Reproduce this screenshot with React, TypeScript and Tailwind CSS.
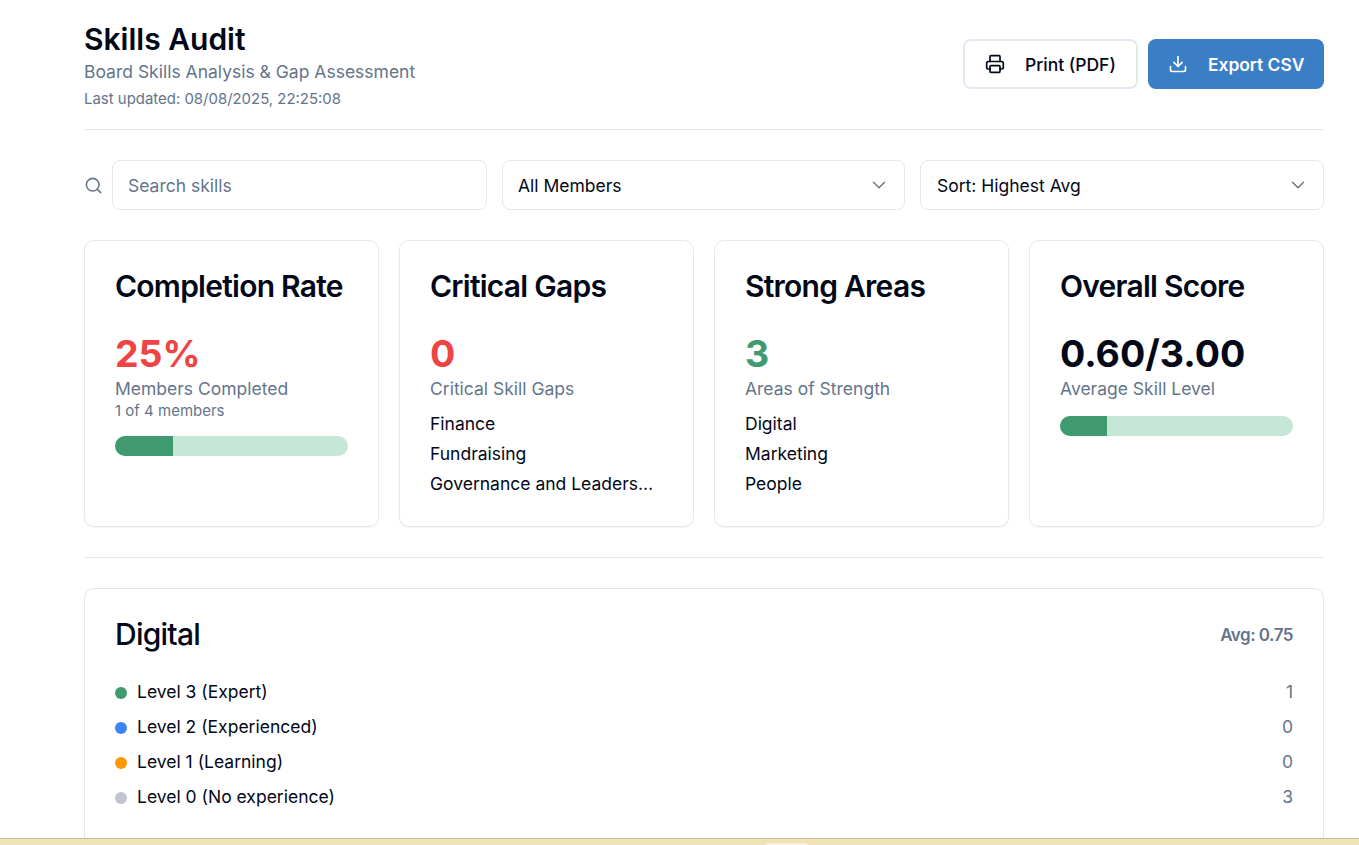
import { Printer, Download, Search, ChevronDown } from "lucide-react";

function Stat({ title, value, valueClass, label, note, items, progress }: { title: string; value: string; valueClass: string; label: string; note?: string; items?: string[]; progress?: number }) {
  return (
    <div className="min-w-0 h-[287px] rounded-[10px] border border-[#e2e8f0] bg-white px-[30px] pt-[25px] shadow-[0_1px_2px_rgba(15,23,42,0.04)]">
      <h2 className="text-[30px] leading-[40px] font-semibold tracking-[-0.75px] text-[#020817] whitespace-nowrap">{title}</h2>
      <div className={`mt-[24px] text-[37.5px] leading-[48px] font-bold ${valueClass}`}>{value}</div>
      <div className="-mt-[1px] mb-[1px] text-[17.5px] leading-[23px] text-[#64748b]">{label}</div>
      {note && <div className="text-[15px] leading-[20px] text-[#64748b]">{note}</div>}
      {progress !== undefined && (
        <div className={`${note ? "mt-[15px]" : "mt-[16px]"} h-[20px] rounded-[10px] bg-[#c6e7d8] overflow-hidden`}>
          <div className="h-full bg-[#3f9a6f]" style={{ width: `${progress}%` }} />
        </div>
      )}
      {items && (
        <ul className="mt-[9px]">
          {items.map((i) => (
            <li key={i} className="text-[17.5px] leading-[30px] text-[#020817] truncate">{i}</li>
          ))}
        </ul>
      )}
    </div>
  );
}

function Level({ color, label, count }: { color: string; label: string; count: number }) {
  return (
    <div className="flex items-center justify-between h-[35px]">
      <div className="flex items-center gap-[10px]">
        <span className={`w-[12px] h-[12px] rounded-full ${color}`} />
        <span className="text-[17.5px] text-[#020817]">{label}</span>
      </div>
      <span className="text-[17.5px] text-[#64748b]">{count}</span>
    </div>
  );
}

export default function App() {
  return (
    <div className="h-[845px] flex flex-col overflow-hidden bg-white font-['Inter',sans-serif]">
      <main className="flex-1 min-h-0 overflow-hidden pl-[84px] pr-[35px]">
        <header className="h-[130px] border-b border-[#e2e8f0] flex justify-between items-start pt-[20px]">
          <div>
            <h1 className="text-[30px] leading-[38px] font-semibold text-[#020817]">Skills Audit</h1>
            <p className="mt-[1px] text-[17.5px] leading-[26px] text-[#64748b]">Board Skills Analysis &amp; Gap Assessment</p>
            <p className="mt-[4px] text-[14.95px] leading-[20px] text-[#64748b]">Last updated: 08/08/2025, 22:25:08</p>
          </div>
          <div className="flex gap-[10px] mt-[19px]">
            <button className="w-[175px] h-[50px] rounded-[8px] border-2 border-[#e2e8f0] bg-white flex items-center pl-[20px] text-[17.5px] font-medium text-[#020817]">
              <Printer size={20} strokeWidth={2} />
              <span className="ml-[20px] mt-[2px]">Print (PDF)</span>
            </button>
            <button className="w-[176px] h-[50px] rounded-[8px] bg-[#3a7fc6] flex items-center pl-[20px] text-[17.4px] font-semibold text-white">
              <Download size={20} strokeWidth={2} />
              <span className="ml-[20px] mt-[2px]">Export CSV</span>
            </button>
          </div>
        </header>

        <div className="mt-[30px] flex items-center h-[50px]">
          <Search size={19} strokeWidth={2} className="text-[#64748b] shrink-0" />
          <div className="ml-[9px] w-[375px] h-[50px] rounded-[8px] border border-[#e2e8f0] flex items-center pl-[15px] text-[17.5px] text-[#64748b]">
            <span className="mt-[2px]">Search skills</span>
          </div>
          <div className="ml-[15px] w-[403px] h-[50px] rounded-[8px] border border-[#e2e8f0] flex items-center justify-between pl-[15px] pr-[14px] text-[17.5px] text-[#020817]">
            <span className="mt-[2px]">All Members</span>
            <ChevronDown size={22} strokeWidth={1.5} className="text-[#6b7280]" />
          </div>
          <div className="ml-[15px] flex-1 h-[50px] rounded-[8px] border border-[#e2e8f0] flex items-center justify-between pl-[16px] pr-[14px] text-[17.5px] text-[#020817]">
            <span className="mt-[2px]">Sort: Highest Avg</span>
            <ChevronDown size={22} strokeWidth={1.5} className="text-[#6b7280]" />
          </div>
        </div>

        <div className="mt-[30px] grid grid-cols-4 gap-[20px]">
          <Stat title="Completion Rate" value="25%" valueClass="text-[#ef4444]" label="Members Completed" note="1 of 4 members" progress={25} />
          <Stat title="Critical Gaps" value="0" valueClass="text-[#ef4444]" label="Critical Skill Gaps" items={["Finance", "Fundraising", "Governance and Leadership"]} />
          <Stat title="Strong Areas" value="3" valueClass="text-[#3f9a6f]" label="Areas of Strength" items={["Digital", "Marketing", "People"]} />
          <Stat title="Overall Score" value="0.60/3.00" valueClass="text-[#020817]" label="Average Skill Level" progress={20} />
        </div>

        <div className="mt-[30px] border-t border-[#e2e8f0]" />

        <section className="mt-[30px] rounded-[10px] border border-[#e2e8f0] px-[30px] pt-[25px] h-[300px]">
          <div className="flex justify-between items-center h-[40px]">
            <h3 className="text-[30px] font-medium tracking-[-0.75px] text-[#020817]">Digital</h3>
            <span className="mt-[4px] text-[17px] font-semibold tracking-[-0.5px] text-[#64748b]">Avg: 0.75</span>
          </div>
          <div className="mt-[21px]">
            <Level color="bg-[#3f9a6f]" label="Level 3 (Expert)" count={1} />
            <Level color="bg-[#3b82f6]" label="Level 2 (Experienced)" count={0} />
            <Level color="bg-[#ff9800]" label="Level 1 (Learning)" count={0} />
            <Level color="bg-[#c0c5d0]" label="Level 0 (No experience)" count={3} />
          </div>
        </section>
      </main>
      <div className="h-[7px] shrink-0 bg-[#efe3b5] border-t border-[#c9bd90] pl-[765px]">
        <div className="w-[43px] h-[3px] mt-[4px] bg-[#f8f2da] rounded-t-[3px]" />
      </div>
    </div>
  );
}
